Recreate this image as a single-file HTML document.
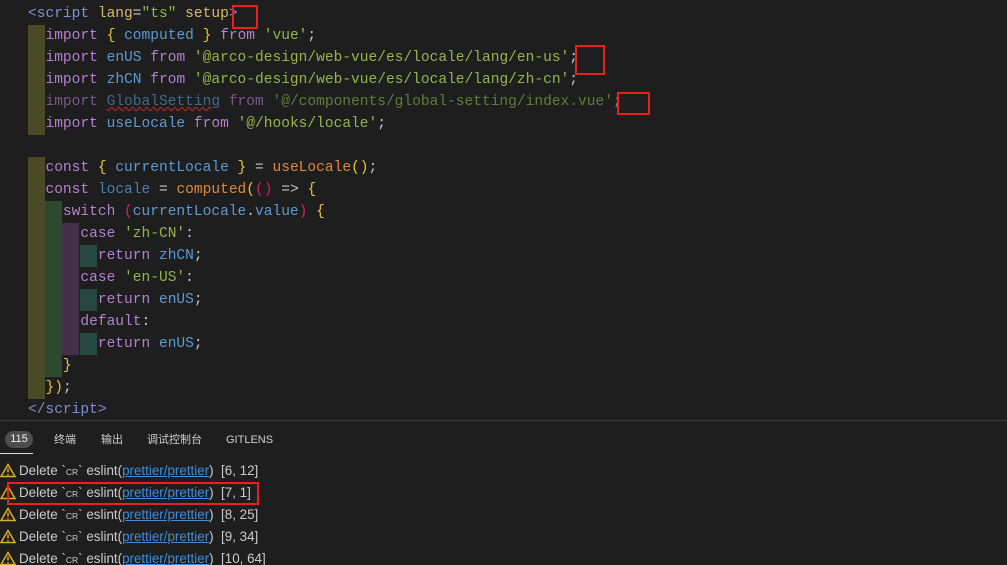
<!DOCTYPE html>
<html><head><meta charset="utf-8"><style>
html,body{margin:0;width:1007px;height:565px;overflow:hidden}
body{background:#1e1e1e;position:relative;font-family:"Liberation Mono",monospace}
.code{position:absolute;left:0;top:2px;width:1007px}
.l{position:absolute;left:28px;height:22px;line-height:22px;font-size:14.55px;white-space:pre;color:#d4d4d4}
.g{position:absolute;width:17px;height:22px}
.k{color:#b480d0}.v{color:#5b9bd5}.s{color:#98b34a}.f{color:#e0893a}.t{color:#7d8fd8}.a{color:#d8b86a}.p{color:#c8c8c8}.r{color:#d0206a}.y{color:#e5c33a}
.box{position:absolute;border:2px solid #e8211c;box-sizing:border-box}
.panel{position:absolute;left:0;top:420px;width:1007px;height:145px;background:#1e1e1e;border-top:1px solid #3a3a3a;font-family:"Liberation Sans","Noto Sans CJK SC",sans-serif}
.tab{position:absolute;top:12px;font-size:11px;line-height:14px;color:#cfcfcf}
.row{position:absolute;left:0;height:22px;line-height:22px;font-size:13.4px;color:#ccc;white-space:pre}
.lk{color:#3c8fe0;text-decoration:underline}
.w{position:absolute;left:0;top:3px}
</style></head><body>
<div class="code">
<div class="g" style="left:28px;top:23px;height:110px;background:#4a4a26"></div>
<div class="g" style="left:28px;top:155px;height:242px;background:#4a4a26"></div>
<div class="g" style="left:45px;top:199px;height:176px;background:#2c4a2e"></div>
<div class="g" style="left:62px;top:221px;height:132px;background:#45304a"></div>
<div class="g" style="left:80px;top:243px;height:22px;background:#27473f"></div>
<div class="g" style="left:80px;top:287px;height:22px;background:#27473f"></div>
<div class="g" style="left:80px;top:331px;height:22px;background:#27473f"></div>

<div class="l" style="top:1px"><span class="t">&lt;script</span> <span class="a">lang</span><span class="p">=</span><span class="s">"ts"</span> <span class="a">setup</span><span class="t">&gt;</span></div>
<div class="l" style="top:23px">  <span class="k">import</span> <span class="y">{</span> <span class="v">computed</span> <span class="y">}</span> <span class="k">from</span> <span class="s">'vue'</span><span class="p">;</span></div>
<div class="l" style="top:45px">  <span class="k">import</span> <span class="v">enUS</span> <span class="k">from</span> <span class="s">'@arco-design/web-vue/es/locale/lang/en-us'</span><span class="p">;</span></div>
<div class="l" style="top:67px">  <span class="k">import</span> <span class="v">zhCN</span> <span class="k">from</span> <span class="s">'@arco-design/web-vue/es/locale/lang/zh-cn'</span><span class="p">;</span></div>
<div class="l" style="top:89px;opacity:.6">  <span class="k">import</span> <span class="v" style="text-decoration:underline wavy #e03030">GlobalSetting</span> <span class="k">from</span> <span class="s">'@/components/global-setting/index.vue'</span><span class="p">;</span></div>
<div class="l" style="top:111px">  <span class="k">import</span> <span class="v">useLocale</span> <span class="k">from</span> <span class="s">'@/hooks/locale'</span><span class="p">;</span></div>
<div class="l" style="top:155px">  <span class="k">const</span> <span class="y">{</span> <span class="v">currentLocale</span> <span class="y">}</span> <span class="p">=</span> <span class="f">useLocale</span><span class="y">()</span><span class="p">;</span></div>
<div class="l" style="top:177px">  <span class="k">const</span> <span class="v" style="color:#4a7fb5">locale</span> <span class="p">=</span> <span class="f">computed</span><span class="y">(</span><span class="r">()</span> <span class="p">=&gt;</span> <span class="y">{</span></div>
<div class="l" style="top:199px">    <span class="k">switch</span> <span class="r">(</span><span class="v">currentLocale</span><span class="p">.</span><span class="v">value</span><span class="r">)</span> <span class="y">{</span></div>
<div class="l" style="top:221px">      <span class="k">case</span> <span class="s">'zh-CN'</span><span class="p">:</span></div>
<div class="l" style="top:243px">        <span class="k">return</span> <span class="v">zhCN</span><span class="p">;</span></div>
<div class="l" style="top:265px">      <span class="k">case</span> <span class="s">'en-US'</span><span class="p">:</span></div>
<div class="l" style="top:287px">        <span class="k">return</span> <span class="v">enUS</span><span class="p">;</span></div>
<div class="l" style="top:309px">      <span class="k">default</span><span class="p">:</span></div>
<div class="l" style="top:331px">        <span class="k">return</span> <span class="v">enUS</span><span class="p">;</span></div>
<div class="l" style="top:353px">    <span class="y">}</span></div>
<div class="l" style="top:375px">  <span class="y">}</span><span class="y">)</span><span class="p">;</span></div>
<div class="l" style="top:397px"><span class="t">&lt;/script&gt;</span></div>
</div>
<div class="box" style="left:232px;top:5px;width:26px;height:24px"></div>
<div class="box" style="left:575px;top:45px;width:30px;height:30px"></div>
<div class="box" style="left:617px;top:92px;width:33px;height:23px"></div>

<div class="panel">
<div style="position:absolute;left:5px;top:10px;width:28px;height:17px;border-radius:9px;background:#4d4d4d;color:#eee;font-size:11px;text-align:center;line-height:17px">115</div>
<div style="position:absolute;left:0;top:32px;width:33px;height:1px;background:#ddd"></div>
<div class="tab" style="left:54px">终端</div>
<div class="tab" style="left:101px">输出</div>
<div class="tab" style="left:147px">调试控制台</div>
<div class="tab" style="left:226px">GITLENS</div>
<div class="row" style="top:39px"><svg class="w" width="16" height="15" viewBox="0 0 16 15"><path d="M8 1.5L15 13.5H1Z" fill="none" stroke="#e0b020" stroke-width="1.5"/><path d="M8 5.5v4M8 11v1.3" stroke="#e0b020" stroke-width="1.5"/></svg><span style="position:absolute;left:19px">Delete `<span style="font-size:8.5px">CR</span>` eslint(<span class="lk">prettier/prettier</span>)  [6, 12]</span></div>
<div class="row" style="top:61px"><svg class="w" width="16" height="15" viewBox="0 0 16 15"><path d="M8 1.5L15 13.5H1Z" fill="none" stroke="#e0b020" stroke-width="1.5"/><path d="M8 5.5v4M8 11v1.3" stroke="#e0b020" stroke-width="1.5"/></svg><span style="position:absolute;left:19px">Delete `<span style="font-size:8.5px">CR</span>` eslint(<span class="lk">prettier/prettier</span>)  [7, 1]</span></div>
<div class="row" style="top:83px"><svg class="w" width="16" height="15" viewBox="0 0 16 15"><path d="M8 1.5L15 13.5H1Z" fill="none" stroke="#e0b020" stroke-width="1.5"/><path d="M8 5.5v4M8 11v1.3" stroke="#e0b020" stroke-width="1.5"/></svg><span style="position:absolute;left:19px">Delete `<span style="font-size:8.5px">CR</span>` eslint(<span class="lk">prettier/prettier</span>)  [8, 25]</span></div>
<div class="row" style="top:105px"><svg class="w" width="16" height="15" viewBox="0 0 16 15"><path d="M8 1.5L15 13.5H1Z" fill="none" stroke="#e0b020" stroke-width="1.5"/><path d="M8 5.5v4M8 11v1.3" stroke="#e0b020" stroke-width="1.5"/></svg><span style="position:absolute;left:19px">Delete `<span style="font-size:8.5px">CR</span>` eslint(<span class="lk">prettier/prettier</span>)  [9, 34]</span></div>
<div class="row" style="top:127px"><svg class="w" width="16" height="15" viewBox="0 0 16 15"><path d="M8 1.5L15 13.5H1Z" fill="none" stroke="#e0b020" stroke-width="1.5"/><path d="M8 5.5v4M8 11v1.3" stroke="#e0b020" stroke-width="1.5"/></svg><span style="position:absolute;left:19px">Delete `<span style="font-size:8.5px">CR</span>` eslint(<span class="lk">prettier/prettier</span>)  [10, 64]</span></div>
<div class="box" style="left:7px;top:61px;width:252px;height:23px"></div>
</div>
</body></html>
